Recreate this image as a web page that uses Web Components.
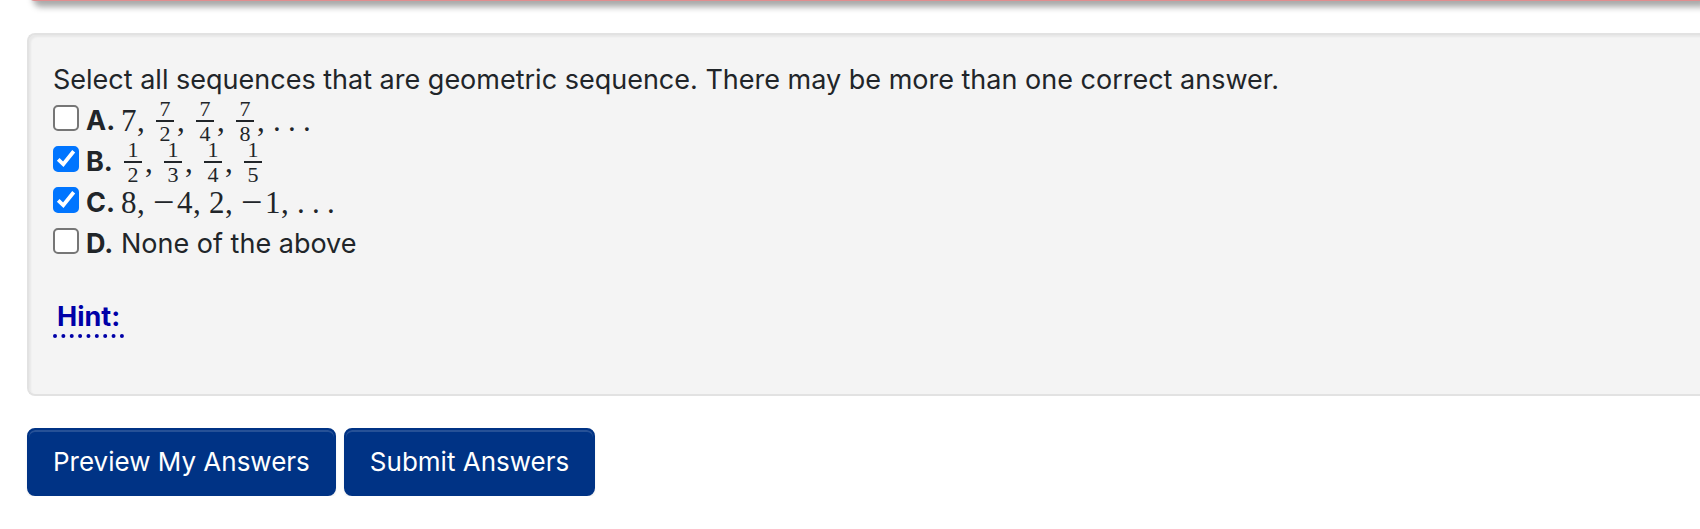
<!DOCTYPE html>
<html lang="en">
<head>
<meta charset="utf-8">
<meta name="viewport" content="width=device-width, initial-scale=1">
<title>Geometric sequences</title>
<style>
    body {
        margin: 0;
        background: #fff;
        color: #212529;
        font: 27px/41px Inter, "Liberation Sans", sans-serif;
        overflow-x: hidden;
    }
</style>
</head>
<body>
<problem-page>
    <result-banner slot="banner"></result-banner>
    <problem-panel>
        Select all sequences that are geometric sequence. There may be more than one correct answer.
        <answer-option slot="options" letter="A"><math-sequence terms="7 7/2 7/4 7/8 ..."></math-sequence></answer-option>
        <answer-option slot="options" letter="B" checked><math-sequence terms="1/2 1/3 1/4 1/5"></math-sequence></answer-option>
        <answer-option slot="options" letter="C" checked><math-sequence terms="8 -4 2 -1 ..."></math-sequence></answer-option>
        <answer-option slot="options" letter="D">None of the above</answer-option>
        <hint-link slot="hint">Hint:</hint-link>
    </problem-panel>
    <action-button slot="actions">Preview My Answers</action-button>
    <action-button slot="actions">Submit Answers</action-button>
</problem-page>

<script>
class ProblemPage extends HTMLElement {
    connectedCallback() {
        this.attachShadow({ mode: 'open' });
        this.shadowRoot.innerHTML = `
            <style>
                :host {
                    display: block;
                    padding-left: 27px;
                }
                main {
                    margin: 32px 0;
                }
                .actions {
                    display: flex;
                    flex-wrap: wrap;
                    gap: 8px;
                }
            </style>
            <slot name="banner"></slot>
            <main><slot></slot></main>
            <div class="actions"><slot name="actions"></slot></div>
        `;
    }
}

class ResultBanner extends HTMLElement {
    connectedCallback() {
        this.attachShadow({ mode: 'open' });
        // only the lower edge of the banner is on screen
        this.shadowRoot.innerHTML = `
            <style>
                :host {
                    display: block;
                    height: 24px;
                    margin-top: -23px;
                    background: #e08e90;
                    border-radius: 8px 0 0 8px;
                    box-shadow: 6px 6px 6px darkgray;
                }
            </style>
        `;
    }
}

class ProblemPanel extends HTMLElement {
    connectedCallback() {
        this.attachShadow({ mode: 'open' });
        this.shadowRoot.innerHTML = `
            <style>
                :host {
                    display: block;
                    padding: 24px 24px 56px;
                    background: #f4f4f4;
                    border: 2px solid #e2e2e2;
                    border-right: 0;
                    border-radius: 8px 0 0 8px;
                    box-shadow: inset 2px 2px 2px rgba(0, 0, 0, 0.05);
                }
                p, fieldset {
                    margin: 0;
                    padding: 0;
                    border: 0;
                }
                .hint {
                    margin-top: 36px;
                }
            </style>
            <p id="question"><slot></slot></p>
            <fieldset aria-labelledby="question"><slot name="options"></slot></fieldset>
            <div class="hint"><slot name="hint"></slot></div>
        `;
    }
}

class AnswerOption extends HTMLElement {
    connectedCallback() {
        const letter = this.getAttribute('letter');
        this.attachShadow({ mode: 'open' });
        this.shadowRoot.innerHTML = `
            <style>
                :host {
                    display: block;
                }
                label {
                    display: flex;
                    align-items: center;
                }
                .box {
                    display: grid;
                    margin: 0 7px 6px 0;
                }
                input, svg {
                    grid-area: 1 / 1;
                    width: 26px;
                    height: 26px;
                }
                input {
                    appearance: none;
                    box-sizing: border-box;
                    margin: 0;
                    background: #fff;
                    border: 2px solid #767676;
                    border-radius: 5px;
                }
                input:checked {
                    background: #0075ff;
                    border-color: #0075ff;
                }
                svg {
                    visibility: hidden;
                    pointer-events: none;
                }
                input:checked + svg {
                    visibility: visible;
                }
                b {
                    min-width: 35px;
                }
            </style>
            <label>
                <span class="box">
                    <input type="checkbox" name="answer" value="${letter}">
                    <svg viewBox="0 0 26 26" aria-hidden="true">
                        <path d="M5.2 13.4 L10.3 18.3 L20.7 5.2" fill="none" stroke="#fff" stroke-width="3.8"/>
                    </svg>
                </span>
                <b>${letter}.</b>
                <slot></slot>
            </label>
        `;
        this.shadowRoot.querySelector('input').checked = this.hasAttribute('checked');
    }
}

class MathSequence extends HTMLElement {
    connectedCallback() {
        const terms = this.getAttribute('terms').split(' ');
        this.attachShadow({ mode: 'open' });
        this.shadowRoot.innerHTML = `
            <style>
                :host {
                    display: flex;
                    align-items: center;
                    font-family: "Liberation Serif", serif;
                    font-size: 31px;
                }
                .digit, .comma {
                    width: 16px;
                }
                .minus {
                    width: 24px;
                    font-size: 38px;
                }
                .dot {
                    width: 15px;
                }
                .frac {
                    display: grid;
                    width: 18px;
                    margin: -4px 3px;
                    font-size: 22px;
                    line-height: 23px;
                    text-align: center;
                }
                .top {
                    border-bottom: 2px solid;
                }
            </style>
            ${terms.map(term => this.renderTerm(term)).join('<span class="comma">,</span>')}
        `;
    }

    renderTerm(term) {
        if (term === '...') {
            return '<span class="dot">.</span>'.repeat(3);
        }
        if (term.includes('/')) {
            const [top, bottom] = term.split('/');
            return `<span class="frac"><span class="top">${top}</span><span>${bottom}</span></span>`;
        }
        const minus = term.startsWith('-') ? '<span class="minus">−</span>' : '';
        return `${minus}<span class="digit">${term.replace('-', '')}</span>`;
    }
}

class HintLink extends HTMLElement {
    connectedCallback() {
        this.attachShadow({ mode: 'open' });
        this.shadowRoot.innerHTML = `
            <style>
                :host {
                    display: block;
                }
                a {
                    display: block;
                    width: fit-content;
                    padding: 0 4px;
                    color: #0000a8;
                    font-weight: 700;
                    line-height: 34px;
                    text-decoration: none;
                    border-bottom: 4px dotted;
                }
            </style>
            <a href="#hint"><slot></slot></a>
        `;
    }
}

class ActionButton extends HTMLElement {
    connectedCallback() {
        this.attachShadow({ mode: 'open' });
        this.shadowRoot.innerHTML = `
            <style>
                :host {
                    display: block;
                }
                button {
                    display: block;
                    padding: 12px 24px;
                    font: inherit;
                    font-size: 26px;
                    line-height: 40px;
                    color: #fff;
                    background: #003385;
                    border: 2px solid #003385;
                    border-radius: 8px;
                    box-shadow: inset 0 2px 0 rgba(255, 255, 255, 0.15), 0 2px 2px rgba(0, 0, 0, 0.075);
                    cursor: pointer;
                }
            </style>
            <button type="button"><slot></slot></button>
        `;
    }
}

customElements.define('problem-page', ProblemPage);
customElements.define('result-banner', ResultBanner);
customElements.define('problem-panel', ProblemPanel);
customElements.define('answer-option', AnswerOption);
customElements.define('math-sequence', MathSequence);
customElements.define('hint-link', HintLink);
customElements.define('action-button', ActionButton);
</script>
</body>
</html>
